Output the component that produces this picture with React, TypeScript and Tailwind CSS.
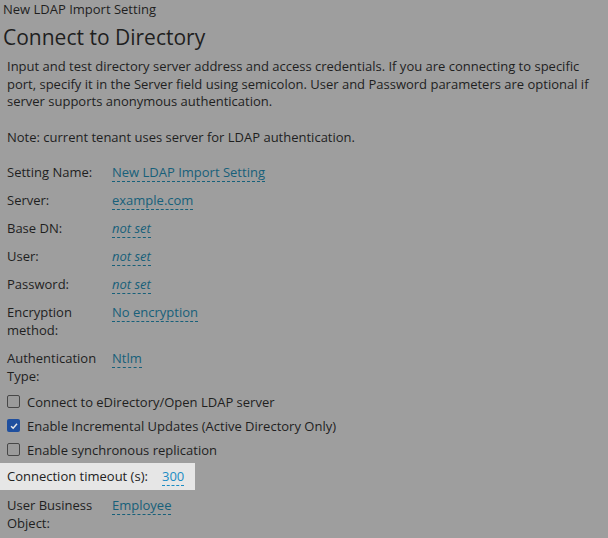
import React from "react"

interface FieldProps {
  label: React.ReactNode
  value: string
  empty?: boolean
}

const Field = ({ label, value, empty }: FieldProps) => (
  <div className="flex leading-[18px]">
    <div className="w-[105px] shrink-0">{label}</div>
    <div>
      <span
        className={
          "border-b border-dashed border-[#17607a] text-[#17607a]" + (empty ? " italic" : "")
        }
      >
        {value}
      </span>
    </div>
  </div>
)

const Check = ({ label, checked }: { label: string; checked?: boolean }) => (
  <label className="flex items-center gap-[7px] leading-[18px]">
    {checked ? (
      <span className="flex h-[13px] w-[13px] items-center justify-center rounded-[2px] bg-[#1f4f9e]">
        <svg viewBox="0 0 12 12" className="h-[10px] w-[10px]">
          <path d="M2.5 6.2 L5 8.6 L9.6 3.4" fill="none" stroke="#e8e8e8" strokeWidth="1.8" />
        </svg>
      </span>
    ) : (
      <span className="h-[13px] w-[13px] rounded-[2px] border border-[#474747] bg-[#9b9b9b]" />
    )}
    <span>{label}</span>
  </label>
)

export default function App() {
  return (
    <div
      className="min-h-screen bg-[#9e9e9e] text-[13px] text-[#1f1f1f]"
      style={{ fontFamily: '"Open Sans", "Liberation Sans", sans-serif' }}
    >
      <div className="px-[3px] leading-[18px]">New LDAP Import Setting</div>
      <h1 className="px-[3px] pt-[4px] text-[21px] leading-[30px]">Connect to Directory</h1>

      <div className="px-[7px] pt-[6px]">
        <p className="leading-[17.5px]">
          Input and test directory server address and access credentials. If you are connecting to specific
          port, specify it in the Server field using semicolon. User and Password parameters are optional if
          server supports anonymous authentication.
        </p>
        <p className="mt-[17px] leading-[18px]">Note: current tenant uses server for LDAP authentication.</p>

        <div className="mt-[17px] flex flex-col gap-[10px]">
          <Field label="Setting Name:" value="New LDAP Import Setting" />
          <Field label="Server:" value="example.com" />
          <Field label="Base DN:" value="not set" empty />
          <Field label="User:" value="not set" empty />
          <Field label="Password:" value="not set" empty />
          <Field
            label={
              <>
                Encryption
                <br />
                method:
              </>
            }
            value="No encryption"
          />
          <Field
            label={
              <>
                Authentication
                <br />
                Type:
              </>
            }
            value="Ntlm"
          />
        </div>

        <div className="mt-[8px] flex flex-col gap-[6px]">
          <Check label="Connect to eDirectory/Open LDAP server" />
          <Check label="Enable Incremental Updates (Active Directory Only)" checked />
          <Check label="Enable synchronous replication" />
        </div>
      </div>

      <div className="mt-[4px] flex w-[195px] py-[4px] pl-[7px] leading-[18px] bg-[#e6e6e6] text-[#222]">
        <div className="w-[155px] shrink-0">Connection timeout (s):</div>
        <span className="border-b border-dashed border-[#1a8cc4] text-[#1a8cc4]">300</span>
      </div>

      <div className="px-[7px] pt-[6px]">
        <Field
          label={
            <>
              User Business
              <br />
              Object:
            </>
          }
          value="Employee"
        />
      </div>
    </div>
  )
}
